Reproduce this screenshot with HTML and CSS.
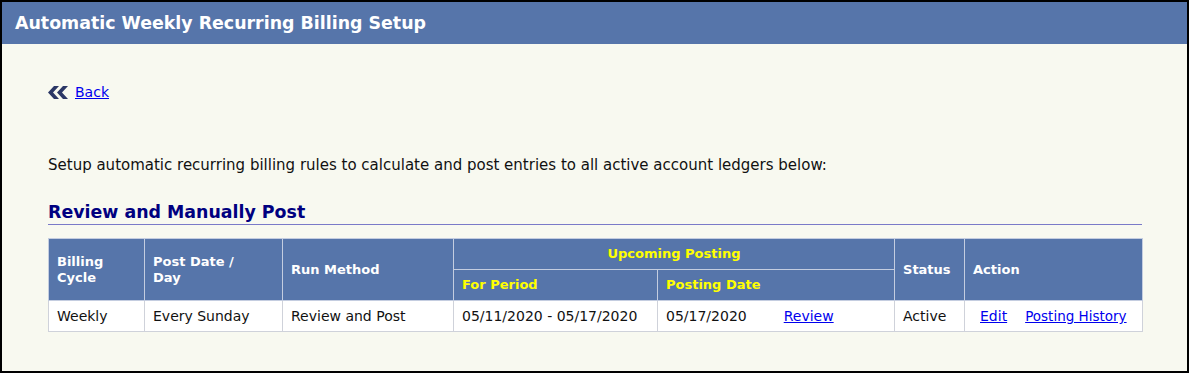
FILE: index.html
```html
<!DOCTYPE html>
<html>
<head>
<meta charset="utf-8">
<link rel="stylesheet" href="styles.css">
</head>
<body>
<div class="frame">
  <div class="titlebar">Automatic Weekly Recurring Billing Setup</div>
  <div class="content">
    <div class="back">
      <svg class="chev" width="21" height="13" viewBox="0 0 21 13">
        <polygon points="6,0 11,0 5,6.5 11,13 6,13 0,6.5" fill="#2b3766"/>
        <polygon points="15,0 20,0 14,6.5 20,13 15,13 9,6.5" fill="#2b3766"/>
      </svg>
      <a href="#" class="link">Back</a>
    </div>
    <p class="desc">Setup automatic recurring billing rules to calculate and post entries to all active account ledgers below:</p>
    <h2 class="section">Review and Manually Post</h2>
    <table class="grid">
      <colgroup>
        <col class="c1"><col class="c2"><col class="c3"><col class="c4"><col class="c5"><col class="c6"><col class="c7">
      </colgroup>
      <thead>
        <tr>
          <th rowspan="2">Billing<br>Cycle</th>
          <th rowspan="2">Post Date /<br>Day</th>
          <th rowspan="2">Run Method</th>
          <th colspan="2" class="hl center">Upcoming Posting</th>
          <th rowspan="2">Status</th>
          <th rowspan="2">Action</th>
        </tr>
        <tr>
          <th class="hl">For Period</th>
          <th class="hl">Posting Date</th>
        </tr>
      </thead>
      <tbody>
        <tr>
          <td>Weekly</td>
          <td>Every Sunday</td>
          <td>Review and Post</td>
          <td>05/11/2020 - 05/17/2020</td>
          <td>05/17/2020<a href="#" class="link review">Review</a></td>
          <td>Active</td>
          <td><a href="#" class="link edit">Edit</a><a href="#" class="link hist">Posting History</a></td>
        </tr>
      </tbody>
    </table>
  </div>
</div>
</body>
</html>
```
FILE: styles.css
```css
html, body {
  margin: 0;
  padding: 0;
  background: #000;
}
.frame {
  box-sizing: border-box;
  width: 1189px;
  height: 373px;
  border: 2px solid #000;
  background: #f8f9f0;
  font-family: "DejaVu Sans", Verdana, sans-serif;
  font-size: 13px;
  color: #111;
}
.titlebar {
  height: 42px;
  box-sizing: border-box;
  background: #5675aa;
  color: #fff;
  font-weight: bold;
  font-size: 17.4px;
  line-height: 42px;
  padding-left: 13px;
}
.content {
  padding: 0 45px 0 46px;
}
.back {
  display: flex;
  align-items: center;
  gap: 6px;
  margin-top: 40px;
  height: 16px;
  font-size: 14px;
}
.chev {
  display: block;
  margin-top: 1px;
}
.link {
  color: #0000ee;
  text-decoration: underline;
}
.desc {
  margin: 56px 0 0 0;
  line-height: 18px;
  font-size: 15px;
}
.section {
  margin: 27px 0 0 0;
  font-size: 17.4px;
  font-weight: bold;
  color: #000080;
  line-height: 22px;
  padding-bottom: 1px;
  border-bottom: 1px solid #7a7ac8;
}
.grid {
  margin-top: 13px;
  width: 1094px;
  table-layout: fixed;
  border-collapse: collapse;
  border: 1px solid #a3a6b8;
}
.c1 { width: 96px; }
.c2 { width: 138px; }
.c3 { width: 171px; }
.c4 { width: 204px; }
.c5 { width: 237px; }
.c6 { width: 70px; }
.c7 { width: 178px; }
.grid th {
  background: #5675aa;
  color: #fff;
  font-weight: bold;
  text-align: left;
  padding: 0 8px;
  height: 30px;
  line-height: 16px;
  border: 1px solid #c4cde0;
  font-size: 13px;
}
.grid th.hl { color: #ffff00; }
.grid th.center { text-align: center; }
.grid td {
  background: #fff;
  padding: 0 8px;
  height: 30px;
  border: 1px solid #cfd2da;
  white-space: nowrap;
  font-size: 14px;
}
.review { margin-left: 37px; }
.edit { margin-left: 7px; }
.hist { margin-left: 18px; font-size: 13.5px; }
```
